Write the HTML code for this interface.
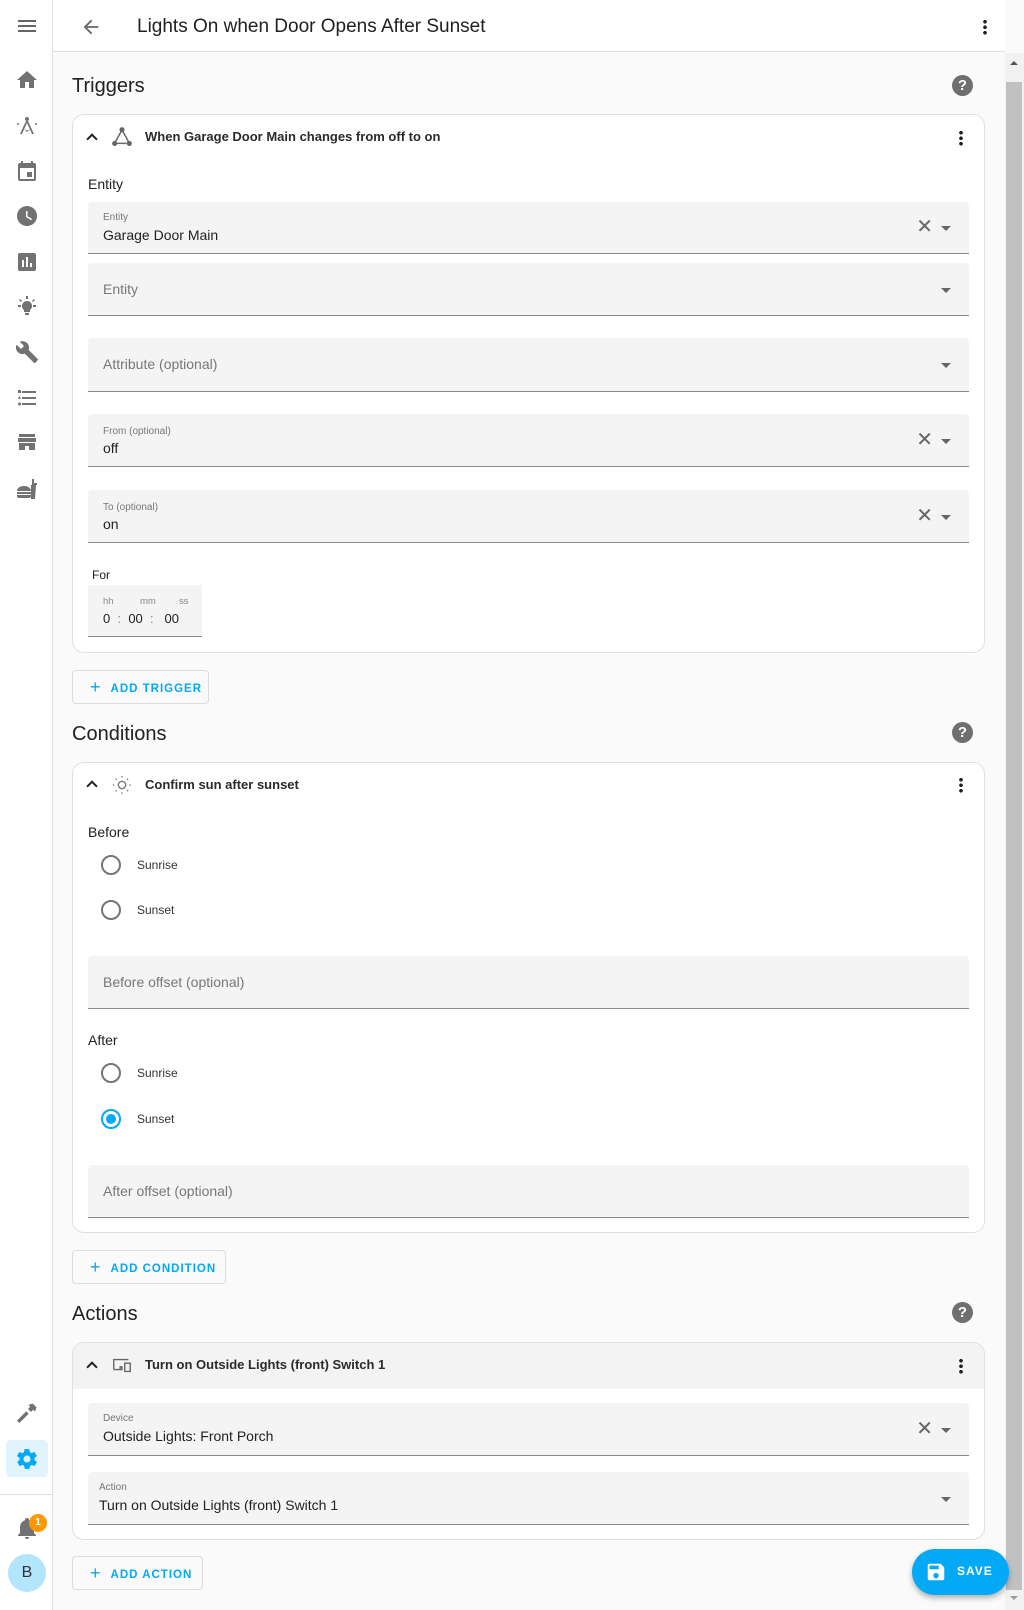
<!DOCTYPE html>
<html><head><meta charset="utf-8"><style>
*{box-sizing:border-box;margin:0;padding:0}
body{width:1024px;height:1610px;position:relative;overflow:hidden;background:#fafafa;font-family:"Liberation Sans",Roboto,sans-serif;color:#212121}
.a{position:absolute}
.top{left:0;top:0;width:1005px;height:52px;background:#fff;border-bottom:1px solid #e0e0e0}
.side{left:0;top:0;width:53px;height:1610px;background:#fff;border-right:1px solid #e0e0e0}
.ic{position:absolute;left:15px;width:24px;height:24px;fill:#727272}
.h2{font-size:20px;color:#212121;left:72px}
.card{left:72px;width:913px;background:#fff;border:1px solid #e0e0e0;border-radius:12px}
.hd{font-size:13px;font-weight:bold;color:#2a2a2a;left:145px}
.lbl{font-size:14px;color:#212121}
.f{left:88px;width:881px;background:#f4f4f4;border-bottom:1px solid #8a8a8a;border-radius:4px 4px 0 0}
.fs{position:absolute;left:15px;font-size:10px;color:#777}
.fv{position:absolute;left:15px;font-size:14px;color:#212121}
.fp{position:absolute;left:15px;font-size:14px;color:#777}
.arr{position:absolute;right:18px;width:0;height:0;border-left:5px solid transparent;border-right:5px solid transparent;border-top:5px solid #666}
.x{position:absolute;right:36px;font-size:20px;color:#666;line-height:20px}
.btn{left:72px;height:34px;border:1px solid #dcdcdc;border-radius:4px;background:#fafafa;color:#03a9f4;font-size:11.5px;font-weight:bold;letter-spacing:1px;line-height:32px;padding-left:17px;white-space:nowrap}
.btn b{font-size:18px;font-weight:normal;margin-right:9px;vertical-align:-1px}
.help{left:952px;width:21px;height:21px;border-radius:50%;background:#6f6f6f;color:#fff;font-weight:bold;font-size:15px;text-align:center;line-height:21px}
.dots{position:absolute;width:4px;height:16px;background:radial-gradient(circle,#212121 1.7px,transparent 2px) 0 0/4px 5.5px repeat-y}
.radio{left:101px;width:20px;height:20px;border:2px solid #757575;border-radius:50%}
.rl{left:137px;font-size:12px;color:#333}
.chev{position:absolute;width:8px;height:8px;border-left:2.3px solid #212121;border-top:2.3px solid #212121;transform:rotate(45deg)}
</style></head><body>
<div class="a top"></div>
<div class="a side"></div>
<div class="a" style="left:18px;top:20px;width:18px;height:2px;background:#666;box-shadow:0 5px 0 #666,0 10px 0 #666"></div>
<svg class="ic" style="top:68px" viewBox="0 0 24 24"><path d="M10 20v-6h4v6h5v-8h3L12 3 2 12h3v8z"/></svg>
<svg class="ic" style="top:114px" viewBox="0 0 24 24"><path d="M12 3a2 2 0 1 1 0 4 2 2 0 0 1 0-4zM11 7L5 20h2l5-11 5 11h2L13 7zM9 15l3 3 3-3-3 1.5z" /><circle cx="3" cy="10" r="1"/><circle cx="21" cy="10" r="1"/></svg>
<svg class="ic" style="top:159px" viewBox="0 0 24 24"><path d="M19 4h-1V2h-2v2H8V2H6v2H5a2 2 0 0 0-2 2v14a2 2 0 0 0 2 2h14a2 2 0 0 0 2-2V6a2 2 0 0 0-2-2zm0 16H5V9h14zm-7-7h5v5h-5z"/></svg>
<svg class="ic" style="top:204px" viewBox="0 0 24 24"><path d="M12 2a10 10 0 1 0 0 20 10 10 0 0 0 0-20zm4.2 14.2L11 13V7h1.5v5.2l4.5 2.7z"/></svg>
<svg class="ic" style="top:250px" viewBox="0 0 24 24"><path d="M19 3H5a2 2 0 0 0-2 2v14a2 2 0 0 0 2 2h14a2 2 0 0 0 2-2V5a2 2 0 0 0-2-2zM9 17H7v-7h2zm4 0h-2V7h2zm4 0h-2v-4h2z"/></svg>
<svg class="ic" style="top:295px" viewBox="0 0 24 24"><path d="M12 6a5 5 0 0 0-3 9v2h6v-2a5 5 0 0 0-3-9zM10 18h4v2h-4zM11 1h2v3h-2zM3 10h3v2H3zm15 0h3v2h-3zM5 4l2 2-1 1-2-2zm14 0l1 1-2 2-1-1z"/></svg>
<svg class="ic" style="top:340px" viewBox="0 0 24 24"><path d="M22.7 19l-9.1-9.1c.9-2.3.4-5-1.5-6.9-2-2-5-2.4-7.4-1.3L9 6 6 9 1.6 4.7C.4 7.1.9 10.1 2.9 12.1c1.9 1.9 4.6 2.4 6.9 1.5l9.1 9.1c.4.4 1 .4 1.4 0l2.3-2.3c.5-.4.5-1.1.1-1.400z"/></svg>
<svg class="ic" style="top:386px" viewBox="0 0 24 24"><path d="M7 5h14v2H7zm0 6h14v2H7zm0 6h14v2H7zM3 4h3v3H3zm1.5 6L6 13H3zM4.5 16.5a1.5 1.5 0 1 1 0 3 1.5 1.5 0 0 1 0-3z"/></svg>
<svg class="ic" style="top:431px" viewBox="0 0 24 24"><path d="M4 3h16v3H4zM3 7h18v4H3zm1 5h16v7h-6v-4h-4v4H4z"/></svg>
<svg class="ic" style="top:478px" viewBox="0 0 24 24"><path d="M17 1h2v4h3v2h-1l-1 14h-4v-8c0-3-3-5-7-5S2 10 2 13h14V7h1zM2 14h14v2H2zm0 3h14v1a2 2 0 0 1-2 2H4a2 2 0 0 1-2-2z"/></svg>
<svg class="ic" style="top:1401px" viewBox="0 0 24 24"><path d="M2 19.6l2.4 2.4 9.3-9.3-2.4-2.4zM17.6 2.5l-4.2 1.5 1.8 1.8L13 8l3 3 2.2-2.2 1.8 1.8 1.5-4.2z"/></svg>
<div class="a" style="left:6px;top:1440px;width:42px;height:37px;background:#e1f4fd;border-radius:5px"></div>
<svg class="ic" style="top:1447px;fill:#03a9f4" viewBox="0 0 24 24"><path d="M19.4 13c0-.3.1-.7.1-1s0-.7-.1-1l2.1-1.6c.2-.2.2-.4.1-.6l-2-3.5c-.1-.2-.4-.3-.6-.2l-2.5 1c-.5-.4-1.1-.7-1.7-1l-.4-2.6c0-.3-.2-.4-.5-.4h-4c-.2 0-.5.2-.5.4l-.4 2.6c-.6.3-1.2.6-1.7 1l-2.5-1c-.2-.1-.5 0-.6.2l-2 3.5c-.1.2-.1.5.1.6L4.6 11c0 .3-.1.7-.1 1s0 .7.1 1l-2.1 1.6c-.2.2-.2.4-.1.6l2 3.5c.1.2.4.3.6.2l2.5-1c.5.4 1.1.7 1.7 1l.4 2.6c0 .2.2.4.5.4h4c.2 0 .5-.2.5-.4l.4-2.6c.6-.3 1.2-.6 1.7-1l2.5 1c.2.1.5 0 .6-.2l2-3.5c.1-.2.1-.5-.1-.6zM12 15.5a3.5 3.5 0 1 1 0-7 3.5 3.5 0 0 1 0 7z"/></svg>
<div class="a" style="left:0;top:1494px;width:53px;height:1px;background:#e0e0e0"></div>
<svg class="ic" style="top:1516px" viewBox="0 0 24 24"><path d="M21 19v1H3v-1l2-2v-6c0-3.1 2-5.8 5-6.7V4a2 2 0 0 1 4 0v.3c3 .9 5 3.6 5 6.7v6zm-7 2a2 2 0 0 1-4 0"/></svg>
<div class="a" style="left:29px;top:1514px;width:18px;height:18px;border-radius:50%;background:#ff9800;color:#fff;font-size:10px;font-weight:bold;text-align:center;line-height:18px">1</div>
<div class="a" style="left:8px;top:1554px;width:38px;height:38px;border-radius:50%;background:#b3e5fc;color:#333;font-size:16px;text-align:center;line-height:38px">B</div>
<svg class="a" style="left:80px;top:16px;width:22px;height:22px" viewBox="0 0 24 24"><path d="M20 11H7.8l5.6-5.6L12 4l-8 8 8 8 1.4-1.4L7.8 13H20z" fill="#666"/></svg>
<div class="a" style="left:137px;top:16px;font-size:19px;color:#212121">Lights On when Door Opens After Sunset</div>
<div class="dots" style="left:983px;top:19px"></div>
<div class="a" style="left:1005px;top:53px;width:19px;height:1557px;background:#f1f1f1"></div>
<div class="a" style="left:1006px;top:82px;width:16px;height:1508px;background:#c1c1c1"></div>
<div class="a" style="left:1010px;top:61px;border-left:4px solid transparent;border-right:4px solid transparent;border-bottom:4px solid #555"></div>
<div class="a" style="left:1010px;top:1596px;border-left:4px solid transparent;border-right:4px solid transparent;border-top:4px solid #999"></div>

<div class="a h2" style="top:75px">Triggers</div>
<div class="a help" style="top:75px">?</div>
<div class="a card" style="top:114px;height:539px"></div>
<div class="chev" style="left:88px;top:135px"></div>
<svg class="a" style="left:111px;top:126px;width:22px;height:22px" viewBox="0 0 24 24" fill="none" stroke="#666" stroke-width="1.6"><circle cx="12" cy="4" r="2" fill="#666"/><circle cx="4" cy="19" r="2" fill="#666"/><circle cx="20" cy="19" r="2" fill="#666"/><path d="M11 6L5 17M13 6l6 11M6 19h11"/></svg>
<div class="a hd" style="top:129px">When Garage Door Main changes from off to on</div>
<div class="dots" style="left:959px;top:130px"></div>
<div class="a lbl" style="left:88px;top:176px">Entity</div>
<div class="a f" style="top:202px;height:52px"><div class="fs" style="top:10px">Entity</div><div class="fv" style="top:25px">Garage Door Main</div><div class="x" style="top:15px">✕</div><div class="arr" style="top:24px"></div></div>
<div class="a f" style="top:263px;height:53px"><div class="fp" style="top:18px">Entity</div><div class="arr" style="top:25px"></div></div>
<div class="a f" style="top:338px;height:54px"><div class="fp" style="top:18px">Attribute (optional)</div><div class="arr" style="top:25px"></div></div>
<div class="a f" style="top:414px;height:53px"><div class="fs" style="top:12px">From (optional)</div><div class="fv" style="top:26px">off</div><div class="x" style="top:16px">✕</div><div class="arr" style="top:25px"></div></div>
<div class="a f" style="top:490px;height:53px"><div class="fs" style="top:12px">To (optional)</div><div class="fv" style="top:26px">on</div><div class="x" style="top:16px">✕</div><div class="arr" style="top:25px"></div></div>
<div class="a" style="left:92px;top:568px;font-size:12px">For</div>
<div class="a" style="left:88px;top:585px;width:114px;height:52px;background:#f4f4f4;border-bottom:1px solid #8a8a8a">
<div class="a" style="left:15px;top:11px;font-size:9.5px;color:#888">hh</div>
<div class="a" style="left:52px;top:11px;font-size:9.5px;color:#888">mm</div>
<div class="a" style="left:91px;top:11px;font-size:9.5px;color:#888">ss</div>
<div class="a" style="left:15px;top:26px;font-size:13px;color:#212121;white-space:pre">0  <span style="color:#888">:</span>  00  <span style="color:#888">:</span>   00</div>
</div>
<div class="a btn" style="top:670px;width:137px"><b>+</b>ADD TRIGGER</div>

<div class="a h2" style="top:723px">Conditions</div>
<div class="a help" style="top:722px">?</div>
<div class="a card" style="top:762px;height:471px"></div>
<div class="chev" style="left:88px;top:782px"></div>
<svg class="a" style="left:111px;top:774px;width:22px;height:22px" viewBox="0 0 24 24" fill="none" stroke="#777" stroke-width="1.5"><circle cx="12" cy="12" r="4"/><path d="M12 2v2M12 20v2M2 12h2M20 12h2M5 5l1.4 1.4M17.6 17.6L19 19M5 19l1.4-1.4M17.6 6.4L19 5" stroke-dasharray="1.5 1.5"/></svg>
<div class="a hd" style="top:777px">Confirm sun after sunset</div>
<div class="dots" style="left:959px;top:777px"></div>
<div class="a lbl" style="left:88px;top:824px">Before</div>
<div class="a radio" style="top:855px"></div><div class="a rl" style="top:858px">Sunrise</div>
<div class="a radio" style="top:900px"></div><div class="a rl" style="top:903px">Sunset</div>
<div class="a f" style="top:956px;height:53px"><div class="fp" style="top:18px">Before offset (optional)</div></div>
<div class="a lbl" style="left:88px;top:1032px">After</div>
<div class="a radio" style="top:1063px"></div><div class="a rl" style="top:1066px">Sunrise</div>
<div class="a radio" style="top:1109px;border-color:#03a9f4"><div class="a" style="left:3px;top:3px;width:10px;height:10px;border-radius:50%;background:#03a9f4"></div></div><div class="a rl" style="top:1112px">Sunset</div>
<div class="a f" style="top:1165px;height:53px"><div class="fp" style="top:18px">After offset (optional)</div></div>
<div class="a btn" style="top:1250px;width:154px"><b>+</b>ADD CONDITION</div>

<div class="a h2" style="top:1303px">Actions</div>
<div class="a help" style="top:1302px">?</div>
<div class="a card" style="top:1342px;height:198px;overflow:hidden"><div style="height:46px;background:#f3f3f3"></div></div>
<div class="chev" style="left:88px;top:1363px"></div>
<svg class="a" style="left:111px;top:1354px;width:22px;height:22px" viewBox="0 0 24 24" fill="none" stroke="#666" stroke-width="1.5"><path d="M3 17V6h16M3 17h8M15 10h6v9h-6zM10 14h2v3h-2z"/></svg>
<div class="a hd" style="top:1357px">Turn on Outside Lights (front) Switch 1</div>
<div class="dots" style="left:959px;top:1358px"></div>
<div class="a f" style="top:1403px;height:53px"><div class="fs" style="top:10px">Device</div><div class="fv" style="top:25px">Outside Lights: Front Porch</div><div class="x" style="top:16px">✕</div><div class="arr" style="top:25px"></div></div>
<div class="a f" style="top:1472px;height:53px"><div class="fs" style="top:10px;left:11px">Action</div><div class="fv" style="top:25px;left:11px">Turn on Outside Lights (front) Switch 1</div><div class="arr" style="top:25px"></div></div>
<div class="a btn" style="top:1556px;width:131px"><b>+</b>ADD ACTION</div>

<div class="a" style="left:912px;top:1549px;width:97px;height:46px;border-radius:23px;background:#03a9f4;box-shadow:0 3px 6px rgba(0,0,0,.3)">
<svg class="a" style="left:13px;top:12px;width:22px;height:22px" viewBox="0 0 24 24"><path d="M17 3H5a2 2 0 0 0-2 2v14a2 2 0 0 0 2 2h14a2 2 0 0 0 2-2V7zm-5 16a3 3 0 1 1 0-6 3 3 0 0 1 0 6zm3-10H5V5h10z" fill="#fff"/></svg>
<div class="a" style="left:45px;top:15px;color:#fff;font-size:12px;font-weight:bold;letter-spacing:1px">SAVE</div>
</div>
</body></html>
